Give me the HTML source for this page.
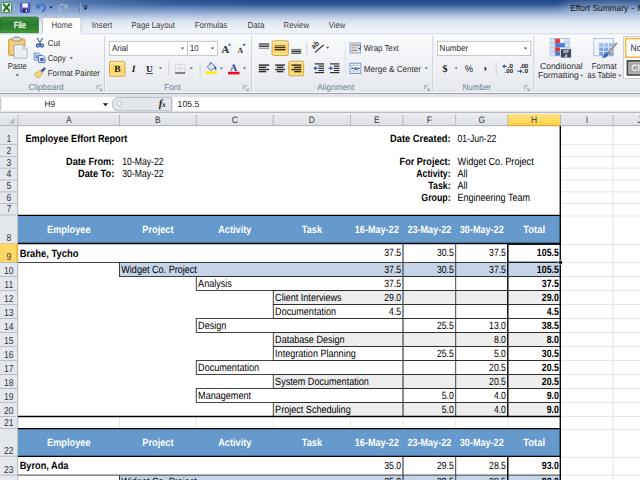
<!DOCTYPE html>
<html><head><meta charset="utf-8"><title>Effort Summary</title>
<style>
html,body{margin:0;padding:0;background:#fff;overflow:hidden}
svg{display:block;font-family:'Liberation Sans', sans-serif;}
text{white-space:pre;text-rendering:geometricPrecision}
</style></head>
<body>
<svg width="640" height="480" viewBox="0 0 640 480">
<defs>
<linearGradient id="gTitle" x1="0" y1="0" x2="0" y2="1">
<stop offset="0" stop-color="#1f4785"/><stop offset="0.12" stop-color="#2f5694"/><stop offset="0.24" stop-color="#5d7fb4"/><stop offset="0.35" stop-color="#8aa5ce"/><stop offset="0.47" stop-color="#b4c6e0"/><stop offset="0.59" stop-color="#d3deee"/><stop offset="0.71" stop-color="#e3eaf4"/><stop offset="0.82" stop-color="#ecf0f7"/><stop offset="1" stop-color="#f1f4f9"/>
</linearGradient>
<linearGradient id="gTitleL" x1="0" y1="0" x2="1" y2="0">
<stop offset="0" stop-color="#93b3de" stop-opacity="0.9"/><stop offset="0.12" stop-color="#93b3de" stop-opacity="0.62"/><stop offset="0.3" stop-color="#93b3de" stop-opacity="0.38"/><stop offset="0.6" stop-color="#93b3de" stop-opacity="0.12"/><stop offset="1" stop-color="#93b3de" stop-opacity="0"/>
</linearGradient>
<linearGradient id="gMaskV" x1="0" y1="0" x2="0" y2="1">
<stop offset="0" stop-color="#fff"/><stop offset="0.45" stop-color="#fff"/><stop offset="1" stop-color="#000"/>
</linearGradient>
<mask id="mTitle"><rect x="0" y="0" width="280" height="20" fill="url(#gMaskV)"/></mask>
<linearGradient id="gFade" x1="0" y1="0" x2="0" y2="1">
<stop offset="0" stop-color="#fff" stop-opacity="1"/><stop offset="0.6" stop-color="#fff" stop-opacity="0.3"/><stop offset="1" stop-color="#fff" stop-opacity="0"/>
</linearGradient>
<linearGradient id="gRibbon" x1="0" y1="0" x2="0" y2="1">
<stop offset="0" stop-color="#fbfcfd"/><stop offset="0.3" stop-color="#f3f5f8"/><stop offset="1" stop-color="#e5e8ed"/>
</linearGradient>
<linearGradient id="gFile" x1="0" y1="0" x2="0" y2="1">
<stop offset="0" stop-color="#3f8f40"/><stop offset="0.45" stop-color="#2a7a2e"/><stop offset="0.8" stop-color="#318a30"/><stop offset="1" stop-color="#4aa63c"/>
</linearGradient>
<linearGradient id="gHot" x1="0" y1="0" x2="0" y2="1">
<stop offset="0" stop-color="#fde9a6"/><stop offset="0.5" stop-color="#fcd462"/><stop offset="1" stop-color="#fde08a"/>
</linearGradient>
<linearGradient id="gColH" x1="0" y1="0" x2="0" y2="1">
<stop offset="0" stop-color="#ffe27c"/><stop offset="1" stop-color="#ffd14a"/>
</linearGradient>
<linearGradient id="gColHdr" x1="0" y1="0" x2="0" y2="1">
<stop offset="0" stop-color="#e9ebee"/><stop offset="1" stop-color="#dcdfe4"/>
</linearGradient>
<filter id="fBlur" x="-20%" y="-100%" width="140%" height="300%"><feGaussianBlur stdDeviation="4"/></filter>
</defs>
<rect x="0" y="0" width="640" height="480" fill="#fff" />
<rect x="0" y="0" width="640" height="34" fill="url(#gTitle)" />
<rect x="0" y="0" width="280" height="20" fill="url(#gTitleL)" mask="url(#mTitle)"/>
<rect x="1.2" y="2.4" width="10.4" height="10.2" fill="#f2f8ee" stroke="#3f8a45" stroke-width="1" rx="1" />
<path d="M3.2 3.8 L9.8 11.4 M9.8 3.8 L3.2 11.4" stroke="#1d6e2b" stroke-width="2.1" fill="none"/>
<line x1="14.5" y1="3" x2="14.5" y2="12" stroke="#9fb6d6" stroke-width="0.7" />
<rect x="20.4" y="3" width="9.6" height="9.4" fill="#5a5ccc" stroke="#3b3da0" stroke-width="0.6" rx="0.8" />
<rect x="22.4" y="3.3" width="5.6" height="4.2" fill="#f4f5fc" />
<rect x="22.8" y="8.8" width="5" height="3.6" fill="#23255e" />
<rect x="25.7" y="9.5" width="1.3" height="2.4" fill="#dfe3f5" />
<path d="M37.5 6.5 q4 -4 7 -0.5 q1.5 3.5 -2.5 6" fill="none" stroke="#3f6fd0" stroke-width="1.8"/>
<path d="M36 4 l0 5 l5 -1z" fill="#3f6fd0"/>
<path d="M49.2 6.5h3.6l-1.8 2.2z" fill="#16233f"/>
<path d="M66.5 6.5 q-4 -4 -7 -0.5 q-1.5 3.5 2.5 6" fill="none" stroke="#a8b3c6" stroke-width="1.8" opacity="0.8"/>
<path d="M68 4 l0 5 l-5 -1z" fill="#a8b3c6" opacity="0.8"/>
<path d="M71.3 6.6h3.4l-1.7 2z" fill="#7f8fb0"/>
<line x1="79.5" y1="3" x2="79.5" y2="12.5" stroke="#5a6f92" stroke-width="0.8" />
<line x1="80.3" y1="3" x2="80.3" y2="12.5" stroke="#b7c8e2" stroke-width="0.6" />
<line x1="83.5" y1="6" x2="87.5" y2="6" stroke="#16233f" stroke-width="0.9" />
<path d="M83.5 7.6000000000000005h4l-2.0 2.4z" fill="#16233f"/>
<ellipse cx="612" cy="8" rx="52" ry="7" fill="#fff" opacity="0.28" filter="url(#fBlur)"/>
<text x="570.3" y="11.2" font-size="8.8" fill="#111" textLength="57.9" lengthAdjust="spacingAndGlyphs">Effort Summary</text>
<text x="631.2" y="11.2" font-size="8.8" fill="#111">-</text>
<text x="637.6" y="11.2" font-size="8.8" fill="#111" textLength="53.69" lengthAdjust="spacingAndGlyphs">Microsoft Excel</text>
<path d="M0 33 V19 q0 -2 2 -2 H36.5 q2 0 2 2 V33z" fill="url(#gFile)" stroke="#1d6b25" stroke-width="0.6"/>
<text x="19.9" y="27.8" font-size="8.8" fill="#fff" stroke="#fff" stroke-width="0.25" text-anchor="middle" textLength="12.2" lengthAdjust="spacingAndGlyphs">File</text>
<path d="M42.5 33.5 V19.5 q0 -2 2 -2 H79 q2 0 2 2 V33.5" fill="#fdfefe" stroke="#aab1be" stroke-width="0.7"/>
<text x="62" y="28" font-size="8.7" fill="#3c3c3c" text-anchor="middle" textLength="21" lengthAdjust="spacingAndGlyphs">Home</text>
<text x="102" y="28" font-size="8.7" fill="#3c3c3c" text-anchor="middle" textLength="20.5" lengthAdjust="spacingAndGlyphs">Insert</text>
<text x="153.2" y="28" font-size="8.7" fill="#3c3c3c" text-anchor="middle" textLength="43.5" lengthAdjust="spacingAndGlyphs">Page Layout</text>
<text x="211" y="28" font-size="8.7" fill="#3c3c3c" text-anchor="middle" textLength="32.5" lengthAdjust="spacingAndGlyphs">Formulas</text>
<text x="256" y="28" font-size="8.7" fill="#3c3c3c" text-anchor="middle" textLength="17" lengthAdjust="spacingAndGlyphs">Data</text>
<text x="296.3" y="28" font-size="8.7" fill="#3c3c3c" text-anchor="middle" textLength="25.5" lengthAdjust="spacingAndGlyphs">Review</text>
<text x="337" y="28" font-size="8.7" fill="#3c3c3c" text-anchor="middle" textLength="16.5" lengthAdjust="spacingAndGlyphs">View</text>
<rect x="0" y="33.5" width="640" height="60" fill="url(#gRibbon)" />
<rect x="0" y="33.5" width="42.5" height="0.8" fill="#c3d0e2" />
<rect x="81" y="33.5" width="559" height="0.8" fill="#c3d0e2" />
<rect x="0" y="92.2" width="640" height="0.9" fill="#f4f5f7" />
<rect x="0" y="93.1" width="640" height="1.1" fill="#979ca5" />
<rect x="0" y="94.2" width="640" height="3.2" fill="#dfe2e7" />
<line x1="104.8" y1="36" x2="104.8" y2="91" stroke="#bcc1c9" stroke-width="0.9" />
<line x1="105.7" y1="36" x2="105.7" y2="91" stroke="#fbfcfe" stroke-width="0.8" />
<line x1="251.8" y1="36" x2="251.8" y2="91" stroke="#bcc1c9" stroke-width="0.9" />
<line x1="252.70000000000002" y1="36" x2="252.70000000000002" y2="91" stroke="#fbfcfe" stroke-width="0.8" />
<line x1="433" y1="36" x2="433" y2="91" stroke="#bcc1c9" stroke-width="0.9" />
<line x1="433.9" y1="36" x2="433.9" y2="91" stroke="#fbfcfe" stroke-width="0.8" />
<line x1="534" y1="36" x2="534" y2="91" stroke="#bcc1c9" stroke-width="0.9" />
<line x1="534.9" y1="36" x2="534.9" y2="91" stroke="#fbfcfe" stroke-width="0.8" />
<rect x="8.6" y="38.8" width="16.4" height="16.8" fill="#efc062" stroke="#c4933b" stroke-width="0.8" rx="1.6" />
<rect x="10.2" y="41" width="13.2" height="13" fill="#f4cd7c" />
<rect x="12.8" y="37.2" width="7.6" height="3.8" fill="#e6e6e6" stroke="#6f6f6f" stroke-width="0.7" rx="1.2" />
<rect x="15" y="36.6" width="3.2" height="1.6" fill="#d8d8d8" stroke="#6f6f6f" stroke-width="0.5" rx="0.8" />
<path d="M14.2 45 H23 L27 49 V58 H14.2z" fill="#fcfdfe" stroke="#8a9ab3" stroke-width="0.8"/>
<path d="M23 45 V49 H27" fill="#e1e7f0" stroke="#8a9ab3" stroke-width="0.6"/>
<line x1="16" y1="48" x2="22" y2="48" stroke="#c9d2e0" stroke-width="0.7" />
<line x1="16" y1="50" x2="25.2" y2="50" stroke="#c9d2e0" stroke-width="0.7" />
<line x1="16" y1="52" x2="25.2" y2="52" stroke="#c9d2e0" stroke-width="0.7" />
<line x1="16" y1="54" x2="25.2" y2="54" stroke="#c9d2e0" stroke-width="0.7" />
<line x1="16" y1="56" x2="25.2" y2="56" stroke="#c9d2e0" stroke-width="0.7" />
<text x="17.2" y="69.2" font-size="8.7" fill="#2e2e2e" text-anchor="middle" textLength="19" lengthAdjust="spacingAndGlyphs">Paste</text>
<path d="M15.399999999999999 74.2h3.6l-1.8 2z" fill="#555"/>
<path d="M37.2 37.8 L41 44.6 M42.6 37.8 L38.8 44.6" stroke="#76859f" stroke-width="1.5" fill="none"/>
<circle cx="37.9" cy="45.6" r="1.5" fill="#dfe6f6" stroke="#2b4fb0" stroke-width="1.3"/><circle cx="42" cy="45.6" r="1.5" fill="#dfe6f6" stroke="#2b4fb0" stroke-width="1.3"/>
<text x="47.8" y="45.8" font-size="8.7" fill="#2e2e2e" textLength="12.4" lengthAdjust="spacingAndGlyphs">Cut</text>
<path d="M34.2 53 H38.6 L40.6 55 V60.2 H34.2z" fill="#d4e1f5" stroke="#5c7fc0" stroke-width="0.8"/>
<path d="M38.6 55.4 H43 L45 57.4 V62.6 H38.6z" fill="#dce7f8" stroke="#3a5fb0" stroke-width="0.8"/>
<rect x="35.6" y="55.2" width="2.2" height="3.2" fill="#5a7fcb" />
<rect x="40.2" y="58" width="3.4" height="3.2" fill="#3f66bb" />
<text x="47.8" y="60.8" font-size="8.7" fill="#2e2e2e" textLength="18" lengthAdjust="spacingAndGlyphs">Copy</text>
<path d="M69.6 57.2h3.4l-1.7 2z" fill="#555"/>
<path d="M34.5 74 L40 70 L43 73.5 L38 78 Q35.5 77.5 34.5 74z" fill="#f0d675" stroke="#b99a35" stroke-width="0.6"/>
<path d="M40.5 70.5 L44.5 67 L46 68.6 L42.6 72.6z" fill="#4f55a8"/>
<text x="47.8" y="76.4" font-size="8.7" fill="#2e2e2e" textLength="52.2" lengthAdjust="spacingAndGlyphs">Format Painter</text>
<text x="46" y="90.2" font-size="8.7" fill="#6f7f97" text-anchor="middle" textLength="35.2" lengthAdjust="spacingAndGlyphs">Clipboard</text>
<path d="M97 89.3 V85.8 H100.5" fill="none" stroke="#8794a8" stroke-width="0.8"/>
<path d="M99.2 88.0 L101.6 90.39999999999999 M101.8 88.6 V90.6 H99.8" fill="none" stroke="#8794a8" stroke-width="0.8"/>
<rect x="109.5" y="41.3" width="78" height="14.2" fill="#fff" stroke="#b7bcc4" stroke-width="0.8" />
<rect x="187.5" y="41.3" width="30" height="14.2" fill="#fff" stroke="#b7bcc4" stroke-width="0.8" />
<text x="112" y="51.3" font-size="8.7" fill="#1e1e1e" textLength="16" lengthAdjust="spacingAndGlyphs">Arial</text>
<path d="M180.9 47.4h3.2l-1.6 2z" fill="#444"/>
<text x="190" y="51.3" font-size="8.7" fill="#1e1e1e" textLength="8.5" lengthAdjust="spacingAndGlyphs">10</text>
<path d="M210.9 47.4h3.2l-1.6 2z" fill="#444"/>
<text x="221.4" y="52.5" font-size="10.8" fill="#2a2a2a" font-weight="bold" font-family="'Liberation Serif', serif" textLength="7.8" lengthAdjust="spacingAndGlyphs">A</text>
<path d="M227.8 45.6 l1.7 -2.4 l1.7 2.4z" fill="#2d58b8"/>
<text x="237.6" y="52.5" font-size="7.8" fill="#2a2a2a" font-weight="bold" font-family="'Liberation Serif', serif">A</text>
<path d="M242.4 43.9 h3.4 l-1.7 2.4z" fill="#2d58b8"/>
<rect x="109.5" y="61.3" width="15.5" height="15" fill="url(#gHot)" stroke="#c59b3b" stroke-width="0.8" rx="1.5" />
<text x="117.3" y="72.3" font-size="9.5" fill="#1a1a1a" font-weight="bold" text-anchor="middle" font-family="'Liberation Serif', serif">B</text>
<text x="133.5" y="72.3" font-size="9.5" fill="#1a1a1a" font-weight="bold" text-anchor="middle" font-style="italic" font-family="'Liberation Serif', serif">I</text>
<text x="149.5" y="72" font-size="9" fill="#1a1a1a" font-weight="bold" text-anchor="middle" font-family="'Liberation Serif', serif">U</text>
<line x1="146" y1="73.6" x2="153" y2="73.6" stroke="#1a1a1a" stroke-width="0.8" />
<path d="M158.9 67.5h3.2l-1.6 2z" fill="#666"/>
<line x1="168.8" y1="62" x2="168.8" y2="75.5" stroke="#c6cad1" stroke-width="0.8" />
<rect x="175.5" y="64.4" width="9.4" height="8.4" fill="none" stroke="#b9bec7" stroke-width="0.6" stroke-dasharray="1 0.6"/>
<line x1="180.2" y1="64.4" x2="180.2" y2="72.8" stroke="#b9bec7" stroke-width="0.6" stroke-dasharray="1 0.6"/>
<line x1="175.5" y1="68.5" x2="185" y2="68.5" stroke="#b9bec7" stroke-width="0.6" stroke-dasharray="1 0.6"/>
<line x1="175.2" y1="73" x2="185.2" y2="73" stroke="#333" stroke-width="1.1" />
<path d="M189.70000000000002 67.5h3.2l-1.6 2z" fill="#666"/>
<line x1="200" y1="62" x2="200" y2="75.5" stroke="#c6cad1" stroke-width="0.8" />
<path d="M207.2 66.6 L211.4 63 L215.4 66.8 L211 70.6z" fill="#dde7f6" stroke="#4d6596" stroke-width="0.9"/>
<path d="M209 63.4 q1.6 -1.6 3 0" fill="none" stroke="#4d6596" stroke-width="0.8"/>
<path d="M214.6 65.4 q2.6 2.2 1.4 5 q-2 -1.4 -1.4 -5z" fill="#2d58b8"/>
<rect x="205.5" y="71.5" width="11.5" height="2.6" fill="#ffee00" />
<path d="M219.9 67.5h3.2l-1.6 2z" fill="#666"/>
<text x="233.7" y="71.3" font-size="10" fill="#1d3f8f" font-weight="bold" text-anchor="middle" font-family="'Liberation Serif', serif">A</text>
<rect x="228" y="71.8" width="11.5" height="2.6" fill="#e81123" />
<path d="M242.9 67.5h3.2l-1.6 2z" fill="#666"/>
<text x="172.5" y="90.2" font-size="8.7" fill="#6f7f97" text-anchor="middle" textLength="16.5" lengthAdjust="spacingAndGlyphs">Font</text>
<path d="M243.5 89.3 V85.8 H247.0" fill="none" stroke="#8794a8" stroke-width="0.8"/>
<path d="M245.7 88.0 L248.1 90.39999999999999 M248.3 88.6 V90.6 H246.3" fill="none" stroke="#8794a8" stroke-width="0.8"/>
<line x1="258.8" y1="43.9" x2="269.2" y2="43.9" stroke="#4a4a4a" stroke-width="1.3" />
<line x1="258.8" y1="46.1" x2="269.2" y2="46.1" stroke="#2e2e2e" stroke-width="1.4" />
<line x1="258.8" y1="48.2" x2="269.2" y2="48.2" stroke="#777" stroke-width="1.0" />
<rect x="272" y="40.8" width="16.4" height="14.7" fill="url(#gHot)" stroke="#c59b3b" stroke-width="0.8" rx="1.5" />
<line x1="274.6" y1="45.4" x2="285.4" y2="45.4" stroke="#8a7430" stroke-width="0.9" />
<line x1="274.6" y1="47.4" x2="285.4" y2="47.4" stroke="#3a3218" stroke-width="1.5" />
<line x1="274.6" y1="49.7" x2="285.4" y2="49.7" stroke="#3a3218" stroke-width="1.4" />
<line x1="291.3" y1="49.4" x2="301.2" y2="49.4" stroke="#777" stroke-width="1.0" />
<line x1="291.3" y1="51.2" x2="301.2" y2="51.2" stroke="#2e2e2e" stroke-width="1.4" />
<line x1="291.3" y1="53.2" x2="301.2" y2="53.2" stroke="#4a4a4a" stroke-width="1.3" />
<line x1="306.7" y1="41.5" x2="306.7" y2="55" stroke="#c6cad1" stroke-width="0.8" />
<path d="M315 52.3 L323.6 45" stroke="#2e2e2e" stroke-width="1.1"/>
<text x="0" y="0" font-size="7" font-weight="bold" fill="#2e2e2e" transform="translate(313.6,49.2) rotate(-40)">ab</text>
<path d="M326.0 46.8h3.2l-1.6 2z" fill="#555"/>
<line x1="345.2" y1="41.5" x2="345.2" y2="76" stroke="#dcdfe4" stroke-width="0.8" />
<rect x="350" y="43" width="10.6" height="10" fill="#dbe5f4" stroke="#7f93b8" stroke-width="0.8" />
<line x1="351.4" y1="45.2" x2="359.4" y2="45.2" stroke="#c58a4c" stroke-width="1.2" />
<line x1="351.4" y1="47.8" x2="357" y2="47.8" stroke="#8a9dc0" stroke-width="0.9" />
<line x1="351.4" y1="50.4" x2="357.4" y2="50.4" stroke="#c58a4c" stroke-width="1.2" />
<path d="M359.4 45.2 q2.4 0.6 0.6 3.2" fill="none" stroke="#3a5a9a" stroke-width="0.9"/><path d="M358 48.6 l2.6 -1.2 l-0.2 2.6z" fill="#3a5a9a"/>
<text x="363.8" y="51.3" font-size="8.7" fill="#2e2e2e" textLength="35" lengthAdjust="spacingAndGlyphs">Wrap Text</text>
<line x1="258.8" y1="65.1" x2="269.2" y2="65.1" stroke="#2e2e2e" stroke-width="1.45" />
<line x1="258.8" y1="67.3" x2="266.2" y2="67.3" stroke="#2e2e2e" stroke-width="1.45" />
<line x1="258.8" y1="69.5" x2="269.2" y2="69.5" stroke="#2e2e2e" stroke-width="1.45" />
<line x1="258.8" y1="71.6" x2="266.2" y2="71.6" stroke="#2e2e2e" stroke-width="1.45" />
<line x1="275.20000000000005" y1="65.1" x2="285.0" y2="65.1" stroke="#2e2e2e" stroke-width="1.45" />
<line x1="276.8" y1="67.3" x2="283.40000000000003" y2="67.3" stroke="#2e2e2e" stroke-width="1.45" />
<line x1="275.20000000000005" y1="69.5" x2="285.0" y2="69.5" stroke="#2e2e2e" stroke-width="1.45" />
<line x1="276.8" y1="71.6" x2="283.40000000000003" y2="71.6" stroke="#2e2e2e" stroke-width="1.45" />
<rect x="288.7" y="61.2" width="15" height="14.6" fill="url(#gHot)" stroke="#c59b3b" stroke-width="0.8" rx="1.5" />
<line x1="291.4" y1="65.1" x2="301.2" y2="65.1" stroke="#3a3218" stroke-width="1.45" />
<line x1="294.2" y1="67.3" x2="301.2" y2="67.3" stroke="#3a3218" stroke-width="1.45" />
<line x1="291.4" y1="69.5" x2="301.2" y2="69.5" stroke="#3a3218" stroke-width="1.45" />
<line x1="294.2" y1="71.6" x2="301.2" y2="71.6" stroke="#3a3218" stroke-width="1.45" />
<line x1="314.7" y1="63.9" x2="324.1" y2="63.9" stroke="#2e2e2e" stroke-width="1.2" />
<line x1="318.5" y1="66.1" x2="324.1" y2="66.1" stroke="#2e2e2e" stroke-width="1.2" />
<line x1="318.5" y1="68.3" x2="324.1" y2="68.3" stroke="#2e2e2e" stroke-width="1.2" />
<line x1="318.5" y1="70.5" x2="324.1" y2="70.5" stroke="#2e2e2e" stroke-width="1.2" />
<line x1="314.7" y1="72.6" x2="324.1" y2="72.6" stroke="#2e2e2e" stroke-width="1.2" />
<line x1="330.0" y1="63.9" x2="339.40000000000003" y2="63.9" stroke="#2e2e2e" stroke-width="1.2" />
<line x1="333.8" y1="66.1" x2="339.40000000000003" y2="66.1" stroke="#2e2e2e" stroke-width="1.2" />
<line x1="333.8" y1="68.3" x2="339.40000000000003" y2="68.3" stroke="#2e2e2e" stroke-width="1.2" />
<line x1="333.8" y1="70.5" x2="339.40000000000003" y2="70.5" stroke="#2e2e2e" stroke-width="1.2" />
<line x1="330.0" y1="72.6" x2="339.40000000000003" y2="72.6" stroke="#2e2e2e" stroke-width="1.2" />
<path d="M313.3 68.3 l2.8 -2.3 v4.6z" fill="#2d58b8"/><path d="M315.5 68.3 h2.4" stroke="#2d58b8" stroke-width="1.1"/>
<path d="M333 68.3 l-2.8 -2.3 v4.6z" fill="#2d58b8"/><path d="M328.4 68.3 h2.4" stroke="#2d58b8" stroke-width="1.1"/>
<rect x="350" y="63.2" width="10.8" height="10.2" fill="#f4f7fc" stroke="#6d8ac6" stroke-width="0.9" />
<line x1="353.6" y1="63.2" x2="353.6" y2="73.4" stroke="#8fa7d8" stroke-width="0.7" />
<line x1="357.2" y1="63.2" x2="357.2" y2="73.4" stroke="#8fa7d8" stroke-width="0.7" />
<line x1="350" y1="65.8" x2="360.8" y2="65.8" stroke="#8fa7d8" stroke-width="0.7" />
<line x1="350" y1="70.8" x2="360.8" y2="70.8" stroke="#8fa7d8" stroke-width="0.7" />
<rect x="350.5" y="66.2" width="9.8" height="4.2" fill="#eaf0fa" />
<path d="M351.2 68.3 h2.6 M359.6 68.3 h-2.6" stroke="#1f2f5f" stroke-width="1"/>
<text x="355.4" y="70" font-size="5.2" fill="#1f2f5f" font-weight="bold" text-anchor="middle">a</text>
<text x="363.8" y="72" font-size="8.7" fill="#2e2e2e" textLength="57.2" lengthAdjust="spacingAndGlyphs">Merge &amp; Center</text>
<path d="M424.7 67.5h3.2l-1.6 2z" fill="#666"/>
<text x="335.8" y="90.2" font-size="8.7" fill="#6f7f97" text-anchor="middle" textLength="37" lengthAdjust="spacingAndGlyphs">Alignment</text>
<path d="M424.5 89.3 V85.8 H428.0" fill="none" stroke="#8794a8" stroke-width="0.8"/>
<path d="M426.7 88.0 L429.1 90.39999999999999 M429.3 88.6 V90.6 H427.3" fill="none" stroke="#8794a8" stroke-width="0.8"/>
<rect x="437.5" y="41.3" width="93.3" height="14.2" fill="#fff" stroke="#b7bcc4" stroke-width="0.8" />
<text x="439.6" y="51.3" font-size="8.7" fill="#1e1e1e" textLength="28.5" lengthAdjust="spacingAndGlyphs">Number</text>
<path d="M523.9 47.4h3.2l-1.6 2z" fill="#444"/>
<text x="445" y="72.2" font-size="10.2" fill="#1a1a1a" font-weight="bold" text-anchor="middle" font-family="'Liberation Serif', serif">$</text>
<path d="M454.59999999999997 67.5h3.2l-1.6 2z" fill="#666"/>
<text x="469" y="72.2" font-size="9.6" fill="#1a1a1a" text-anchor="middle" textLength="8.3" lengthAdjust="spacingAndGlyphs">%</text>
<text x="485.2" y="75.6" font-size="13" fill="#1a1a1a" font-weight="bold" text-anchor="middle" font-family="'Liberation Serif', serif">’</text>
<line x1="496.2" y1="62" x2="496.2" y2="75.5" stroke="#c6cad1" stroke-width="0.8" />
<text x="513" y="68.2" font-size="6.2" fill="#222" font-weight="bold" text-anchor="end" textLength="5.6" lengthAdjust="spacingAndGlyphs">.0</text>
<text x="513" y="73.4" font-size="6.2" fill="#222" font-weight="bold" text-anchor="end" textLength="8.4" lengthAdjust="spacingAndGlyphs">.00</text>
<path d="M502.2 66.4 l2.6 -2.1 v4.2z" fill="#2d58b8"/><path d="M504.4 66.4 h2.6" stroke="#2d58b8" stroke-width="1.1"/>
<text x="528.2" y="68.2" font-size="6.2" fill="#222" font-weight="bold" text-anchor="end" textLength="8.4" lengthAdjust="spacingAndGlyphs">.00</text>
<text x="528.2" y="73.4" font-size="6.2" fill="#222" font-weight="bold" text-anchor="end" textLength="5.6" lengthAdjust="spacingAndGlyphs">.0</text>
<path d="M522.6 71.2 l-2.6 -2.1 v4.2z" fill="#2d58b8"/><path d="M517.4 71.2 h2.8" stroke="#2d58b8" stroke-width="1.1"/>
<text x="476.8" y="90.2" font-size="8.7" fill="#6f7f97" text-anchor="middle" textLength="28.5" lengthAdjust="spacingAndGlyphs">Number</text>
<path d="M524.5 89.3 V85.8 H528.0" fill="none" stroke="#8794a8" stroke-width="0.8"/>
<path d="M526.7 88.0 L529.1 90.39999999999999 M529.3 88.6 V90.6 H527.3" fill="none" stroke="#8794a8" stroke-width="0.8"/>
<rect x="550.2" y="38.6" width="19.5" height="17.2" fill="#fdfeff" stroke="#8fa8d4" stroke-width="0.7" />
<rect x="550.4" y="38.8" width="4.6" height="16.8" fill="#d5e1f4" />
<rect x="565" y="38.8" width="4.6" height="16.8" fill="#d5e1f4" />
<line x1="550.2" y1="42.9" x2="569.7" y2="42.9" stroke="#9db4dc" stroke-width="0.6" />
<line x1="550.2" y1="47.2" x2="569.7" y2="47.2" stroke="#9db4dc" stroke-width="0.6" />
<line x1="550.2" y1="51.5" x2="569.7" y2="51.5" stroke="#9db4dc" stroke-width="0.6" />
<line x1="555.08" y1="38.6" x2="555.08" y2="55.8" stroke="#9db4dc" stroke-width="0.6" />
<line x1="559.96" y1="38.6" x2="559.96" y2="55.8" stroke="#9db4dc" stroke-width="0.6" />
<line x1="564.84" y1="38.6" x2="564.84" y2="55.8" stroke="#9db4dc" stroke-width="0.6" />
<rect x="555.2" y="38.8" width="4.7" height="4.1" fill="#e2342d" />
<rect x="555.2" y="43.1" width="9.6" height="4.1" fill="#4a7ad6" />
<rect x="555.2" y="47.4" width="4.7" height="4.1" fill="#e2342d" />
<rect x="555.2" y="47.4" width="9.6" height="4.1" fill="#4a7ad6" opacity="0.0"/>
<rect x="555.2" y="51.7" width="4.7" height="3.9" fill="#4a7ad6" />
<rect x="560.6" y="48.9" width="10.6" height="9" fill="#39455c" stroke="#e8edf5" stroke-width="0.6" />
<text x="565.9" y="53.2" font-size="4.8" fill="#fff" font-weight="bold" text-anchor="middle">≤≠</text>
<text x="565.9" y="57" font-size="4.4" fill="#fff" font-weight="bold" text-anchor="middle">≥</text>
<text x="561.3" y="69" font-size="8.7" fill="#2e2e2e" text-anchor="middle" textLength="42.6" lengthAdjust="spacingAndGlyphs">Conditional</text>
<text x="558.4" y="78.2" font-size="8.7" fill="#2e2e2e" text-anchor="middle" textLength="41" lengthAdjust="spacingAndGlyphs">Formatting</text>
<path d="M580.1999999999999 74.8h3.2l-1.6 2z" fill="#666"/>
<rect x="593.9" y="38.6" width="19.5" height="17.2" fill="#f4f8fe" stroke="#8fa8d4" stroke-width="0.7" />
<rect x="598.8" y="42.9" width="14.4" height="12.7" fill="#7da3e4" />
<rect x="598.8" y="42.9" width="14.4" height="4.3" fill="#9dbbee" />
<line x1="593.9" y1="42.9" x2="613.4" y2="42.9" stroke="#e9f0fb" stroke-width="0.8" />
<line x1="593.9" y1="47.2" x2="613.4" y2="47.2" stroke="#e9f0fb" stroke-width="0.8" />
<line x1="593.9" y1="51.5" x2="613.4" y2="51.5" stroke="#e9f0fb" stroke-width="0.8" />
<line x1="598.78" y1="38.6" x2="598.78" y2="55.8" stroke="#e9f0fb" stroke-width="0.8" />
<line x1="603.66" y1="38.6" x2="603.66" y2="55.8" stroke="#e9f0fb" stroke-width="0.8" />
<line x1="608.54" y1="38.6" x2="608.54" y2="55.8" stroke="#e9f0fb" stroke-width="0.8" />
<path d="M616.2 42 L608.4 51.2 L610 52.6 L617.6 43.4z" fill="#8a8a8a" stroke="#f2f2f2" stroke-width="0.4"/>
<path d="M608.6 50.8 l1.8 1.6 l-1.6 1.8 l-1.9 -1.5z" fill="#b08a4a"/>
<path d="M607 52.6 q-3.6 1 -4.8 5.4 q4.6 0.4 6.6 -3.8z" fill="#3b69c9"/>
<text x="604.2" y="69" font-size="8.7" fill="#2e2e2e" text-anchor="middle" textLength="25" lengthAdjust="spacingAndGlyphs">Format</text>
<text x="601.8" y="78.2" font-size="8.7" fill="#2e2e2e" text-anchor="middle" textLength="29" lengthAdjust="spacingAndGlyphs">as Table</text>
<path d="M618.1999999999999 74.8h3.2l-1.6 2z" fill="#666"/>
<rect x="623.5" y="36.5" width="20" height="42" fill="#fff" stroke="#b7bcc4" stroke-width="0.7" />
<rect x="625.6" y="38.6" width="20" height="18.6" fill="#fff" stroke="#f0b93a" stroke-width="1.6" />
<text x="630.6" y="51.2" font-size="9.6" fill="#1b2442" textLength="27.84" lengthAdjust="spacingAndGlyphs">Normal</text>
<rect x="627.4" y="60.8" width="20" height="14.2" fill="#a5a5a5" stroke="#3f3f3f" stroke-width="1.5" />
<rect x="629" y="62.4" width="20" height="11" fill="none" stroke="#c8c8c8" stroke-width="0.5" />
<text x="631.2" y="70.8" font-size="9.6" fill="#ececec" font-weight="bold" textLength="44.18" lengthAdjust="spacingAndGlyphs">Check Cell</text>
<rect x="0" y="97.4" width="640" height="13.2" fill="#fff" />
<rect x="0" y="110.6" width="640" height="1.3" fill="#e6e8ec" />
<rect x="0" y="111.9" width="640" height="1.0" fill="#a9adb4" />
<rect x="0" y="112.9" width="640" height="1.3" fill="#eceef1" />
<rect x="0.4" y="97.4" width="0.8" height="13.2" fill="#a3a8b0" />
<path d="M171.5 97.4 H119.5 q-7.2 0 -7.2 6.7 q0 6.7 7.2 6.7 H171.5z" fill="#e3e6ea" stroke="#a9aeb7" stroke-width="0.8"/>
<circle cx="119" cy="103.4" r="2.3" fill="#f3f4f6" stroke="#aeb3bb" stroke-width="0.7"/>
<rect x="171.5" y="97.4" width="0.8" height="13.2" fill="#b3b8c0" />
<text x="49.7" y="106.6" font-size="8.7" fill="#1e1e1e" text-anchor="middle" textLength="10.6" lengthAdjust="spacingAndGlyphs">H9</text>
<path d="M102.80000000000001 103.25h5.2l-2.6 2.9z" fill="#1a1a1a"/>
<text x="158.8" y="106.6" font-size="11" font-style="italic" font-weight="bold" fill="#222" font-family="'Liberation Serif', serif">f<tspan font-size="7.5" dy="0.4" dx="-0.4">x</tspan></text>
<text x="177.6" y="106.8" font-size="8.9" fill="#1e1e1e" textLength="21.7" lengthAdjust="spacingAndGlyphs">105.5</text>
<line x1="560.5" y1="144.4" x2="640" y2="144.4" stroke="#dce0e7" stroke-width="0.8" />
<line x1="560.5" y1="156.6" x2="640" y2="156.6" stroke="#dce0e7" stroke-width="0.8" />
<line x1="560.5" y1="168.2" x2="640" y2="168.2" stroke="#dce0e7" stroke-width="0.8" />
<line x1="560.5" y1="180" x2="640" y2="180" stroke="#dce0e7" stroke-width="0.8" />
<line x1="560.5" y1="191.8" x2="640" y2="191.8" stroke="#dce0e7" stroke-width="0.8" />
<line x1="560.5" y1="203.5" x2="640" y2="203.5" stroke="#dce0e7" stroke-width="0.8" />
<line x1="560.5" y1="216.0" x2="640" y2="216.0" stroke="#dce0e7" stroke-width="0.8" />
<line x1="560.5" y1="244.5" x2="640" y2="244.5" stroke="#dce0e7" stroke-width="0.8" />
<line x1="560.5" y1="262.5" x2="640" y2="262.5" stroke="#dce0e7" stroke-width="0.8" />
<line x1="560.5" y1="276.5" x2="640" y2="276.5" stroke="#dce0e7" stroke-width="0.8" />
<line x1="560.5" y1="290.5" x2="640" y2="290.5" stroke="#dce0e7" stroke-width="0.8" />
<line x1="560.5" y1="304.5" x2="640" y2="304.5" stroke="#dce0e7" stroke-width="0.8" />
<line x1="560.5" y1="318.5" x2="640" y2="318.5" stroke="#dce0e7" stroke-width="0.8" />
<line x1="560.5" y1="332.5" x2="640" y2="332.5" stroke="#dce0e7" stroke-width="0.8" />
<line x1="560.5" y1="346.5" x2="640" y2="346.5" stroke="#dce0e7" stroke-width="0.8" />
<line x1="560.5" y1="360.5" x2="640" y2="360.5" stroke="#dce0e7" stroke-width="0.8" />
<line x1="560.5" y1="374.5" x2="640" y2="374.5" stroke="#dce0e7" stroke-width="0.8" />
<line x1="560.5" y1="388.5" x2="640" y2="388.5" stroke="#dce0e7" stroke-width="0.8" />
<line x1="560.5" y1="402.5" x2="640" y2="402.5" stroke="#dce0e7" stroke-width="0.8" />
<line x1="560.5" y1="416.5" x2="640" y2="416.5" stroke="#dce0e7" stroke-width="0.8" />
<line x1="560.5" y1="429.4" x2="640" y2="429.4" stroke="#dce0e7" stroke-width="0.8" />
<line x1="560.5" y1="457.3" x2="640" y2="457.3" stroke="#dce0e7" stroke-width="0.8" />
<line x1="560.5" y1="475.1" x2="640" y2="475.1" stroke="#dce0e7" stroke-width="0.8" />
<line x1="613.2" y1="126" x2="613.2" y2="480" stroke="#dce0e7" stroke-width="0.8" />
<rect x="0" y="114.2" width="640" height="11.8" fill="url(#gColHdr)" />
<rect x="0" y="125.3" width="640" height="0.8" fill="#a3a8b0" />
<text x="68.75" y="123.2" font-size="9.4" fill="#33363d" text-anchor="middle" textLength="5.64" lengthAdjust="spacingAndGlyphs">A</text>
<line x1="18" y1="114.5" x2="18" y2="125.5" stroke="#a9aeb6" stroke-width="0.8" />
<text x="157.9" y="123.2" font-size="9.4" fill="#33363d" text-anchor="middle" textLength="5.64" lengthAdjust="spacingAndGlyphs">B</text>
<line x1="119.5" y1="114.5" x2="119.5" y2="125.5" stroke="#a9aeb6" stroke-width="0.8" />
<text x="234.8" y="123.2" font-size="9.4" fill="#33363d" text-anchor="middle" textLength="6.11" lengthAdjust="spacingAndGlyphs">C</text>
<line x1="196.3" y1="114.5" x2="196.3" y2="125.5" stroke="#a9aeb6" stroke-width="0.8" />
<text x="311.9" y="123.2" font-size="9.4" fill="#33363d" text-anchor="middle" textLength="6.11" lengthAdjust="spacingAndGlyphs">D</text>
<line x1="273.3" y1="114.5" x2="273.3" y2="125.5" stroke="#a9aeb6" stroke-width="0.8" />
<text x="376.75" y="123.2" font-size="9.4" fill="#33363d" text-anchor="middle" textLength="5.64" lengthAdjust="spacingAndGlyphs">E</text>
<line x1="350.5" y1="114.5" x2="350.5" y2="125.5" stroke="#a9aeb6" stroke-width="0.8" />
<text x="429.35" y="123.2" font-size="9.4" fill="#33363d" text-anchor="middle" textLength="5.17" lengthAdjust="spacingAndGlyphs">F</text>
<line x1="403" y1="114.5" x2="403" y2="125.5" stroke="#a9aeb6" stroke-width="0.8" />
<text x="481.75" y="123.2" font-size="9.4" fill="#33363d" text-anchor="middle" textLength="6.58" lengthAdjust="spacingAndGlyphs">G</text>
<line x1="455.7" y1="114.5" x2="455.7" y2="125.5" stroke="#a9aeb6" stroke-width="0.8" />
<rect x="507.8" y="114.2" width="52.69999999999999" height="11.4" fill="url(#gColH)" />
<rect x="507.8" y="125" width="52.69999999999999" height="1.1" fill="#e3a72d" />
<text x="534.15" y="123.2" font-size="9.4" fill="#33363d" text-anchor="middle" textLength="6.11" lengthAdjust="spacingAndGlyphs">H</text>
<line x1="507.8" y1="114.5" x2="507.8" y2="125.5" stroke="#a9aeb6" stroke-width="0.8" />
<text x="586.85" y="123.2" font-size="9.4" fill="#33363d" text-anchor="middle" textLength="2.35" lengthAdjust="spacingAndGlyphs">I</text>
<line x1="560.5" y1="114.5" x2="560.5" y2="125.5" stroke="#a9aeb6" stroke-width="0.8" />
<text x="639.6" y="123.2" font-size="9.4" fill="#33363d" text-anchor="middle" textLength="4.23" lengthAdjust="spacingAndGlyphs">J</text>
<line x1="613.2" y1="114.5" x2="613.2" y2="125.5" stroke="#a9aeb6" stroke-width="0.8" />
<path d="M14.5 117.5 V123.5 H8.5z" fill="#b3bdcc"/>
<rect x="0" y="126" width="18" height="354" fill="#e4e7eb" />
<rect x="17.4" y="126" width="0.8" height="354" fill="#a3a8b0" />
<line x1="0" y1="144.4" x2="17.4" y2="144.4" stroke="#aeb3bb" stroke-width="0.8" />
<text x="8.8" y="141.8" font-size="10.2" fill="#33363d" text-anchor="middle" textLength="4.76" lengthAdjust="spacingAndGlyphs">1</text>
<line x1="0" y1="156.6" x2="17.4" y2="156.6" stroke="#aeb3bb" stroke-width="0.8" />
<text x="8.8" y="154.0" font-size="10.2" fill="#33363d" text-anchor="middle" textLength="4.76" lengthAdjust="spacingAndGlyphs">2</text>
<line x1="0" y1="168.2" x2="17.4" y2="168.2" stroke="#aeb3bb" stroke-width="0.8" />
<text x="8.8" y="165.6" font-size="10.2" fill="#33363d" text-anchor="middle" textLength="4.76" lengthAdjust="spacingAndGlyphs">3</text>
<line x1="0" y1="180" x2="17.4" y2="180" stroke="#aeb3bb" stroke-width="0.8" />
<text x="8.8" y="177.4" font-size="10.2" fill="#33363d" text-anchor="middle" textLength="4.76" lengthAdjust="spacingAndGlyphs">4</text>
<line x1="0" y1="191.8" x2="17.4" y2="191.8" stroke="#aeb3bb" stroke-width="0.8" />
<text x="8.8" y="189.20000000000002" font-size="10.2" fill="#33363d" text-anchor="middle" textLength="4.76" lengthAdjust="spacingAndGlyphs">5</text>
<line x1="0" y1="203.5" x2="17.4" y2="203.5" stroke="#aeb3bb" stroke-width="0.8" />
<text x="8.8" y="200.9" font-size="10.2" fill="#33363d" text-anchor="middle" textLength="4.76" lengthAdjust="spacingAndGlyphs">6</text>
<line x1="0" y1="215" x2="17.4" y2="215" stroke="#aeb3bb" stroke-width="0.8" />
<text x="8.8" y="212.4" font-size="10.2" fill="#33363d" text-anchor="middle" textLength="4.76" lengthAdjust="spacingAndGlyphs">7</text>
<line x1="0" y1="243.5" x2="17.4" y2="243.5" stroke="#aeb3bb" stroke-width="0.8" />
<text x="8.8" y="240.9" font-size="10.2" fill="#33363d" text-anchor="middle" textLength="4.76" lengthAdjust="spacingAndGlyphs">8</text>
<rect x="0" y="243.5" width="17.4" height="19.0" fill="#ffd766" />
<rect x="16.6" y="243.5" width="1.2" height="19.0" fill="#e3a72d" />
<line x1="0" y1="262.5" x2="17.4" y2="262.5" stroke="#aeb3bb" stroke-width="0.8" />
<text x="8.8" y="259.9" font-size="10.2" fill="#33363d" text-anchor="middle" textLength="4.76" lengthAdjust="spacingAndGlyphs">9</text>
<line x1="0" y1="276.5" x2="17.4" y2="276.5" stroke="#aeb3bb" stroke-width="0.8" />
<text x="8.8" y="273.9" font-size="10.2" fill="#33363d" text-anchor="middle" textLength="9.53" lengthAdjust="spacingAndGlyphs">10</text>
<line x1="0" y1="290.5" x2="17.4" y2="290.5" stroke="#aeb3bb" stroke-width="0.8" />
<text x="8.8" y="287.9" font-size="10.2" fill="#33363d" text-anchor="middle" textLength="8.89" lengthAdjust="spacingAndGlyphs">11</text>
<line x1="0" y1="304.5" x2="17.4" y2="304.5" stroke="#aeb3bb" stroke-width="0.8" />
<text x="8.8" y="301.9" font-size="10.2" fill="#33363d" text-anchor="middle" textLength="9.53" lengthAdjust="spacingAndGlyphs">12</text>
<line x1="0" y1="318.5" x2="17.4" y2="318.5" stroke="#aeb3bb" stroke-width="0.8" />
<text x="8.8" y="315.9" font-size="10.2" fill="#33363d" text-anchor="middle" textLength="9.53" lengthAdjust="spacingAndGlyphs">13</text>
<line x1="0" y1="332.5" x2="17.4" y2="332.5" stroke="#aeb3bb" stroke-width="0.8" />
<text x="8.8" y="329.9" font-size="10.2" fill="#33363d" text-anchor="middle" textLength="9.53" lengthAdjust="spacingAndGlyphs">14</text>
<line x1="0" y1="346.5" x2="17.4" y2="346.5" stroke="#aeb3bb" stroke-width="0.8" />
<text x="8.8" y="343.9" font-size="10.2" fill="#33363d" text-anchor="middle" textLength="9.53" lengthAdjust="spacingAndGlyphs">15</text>
<line x1="0" y1="360.5" x2="17.4" y2="360.5" stroke="#aeb3bb" stroke-width="0.8" />
<text x="8.8" y="357.9" font-size="10.2" fill="#33363d" text-anchor="middle" textLength="9.53" lengthAdjust="spacingAndGlyphs">16</text>
<line x1="0" y1="374.5" x2="17.4" y2="374.5" stroke="#aeb3bb" stroke-width="0.8" />
<text x="8.8" y="371.9" font-size="10.2" fill="#33363d" text-anchor="middle" textLength="9.53" lengthAdjust="spacingAndGlyphs">17</text>
<line x1="0" y1="388.5" x2="17.4" y2="388.5" stroke="#aeb3bb" stroke-width="0.8" />
<text x="8.8" y="385.9" font-size="10.2" fill="#33363d" text-anchor="middle" textLength="9.53" lengthAdjust="spacingAndGlyphs">18</text>
<line x1="0" y1="402.5" x2="17.4" y2="402.5" stroke="#aeb3bb" stroke-width="0.8" />
<text x="8.8" y="399.9" font-size="10.2" fill="#33363d" text-anchor="middle" textLength="9.53" lengthAdjust="spacingAndGlyphs">19</text>
<line x1="0" y1="416.5" x2="17.4" y2="416.5" stroke="#aeb3bb" stroke-width="0.8" />
<text x="8.8" y="413.9" font-size="10.2" fill="#33363d" text-anchor="middle" textLength="9.53" lengthAdjust="spacingAndGlyphs">20</text>
<line x1="0" y1="428.4" x2="17.4" y2="428.4" stroke="#aeb3bb" stroke-width="0.8" />
<text x="8.8" y="425.79999999999995" font-size="10.2" fill="#33363d" text-anchor="middle" textLength="9.53" lengthAdjust="spacingAndGlyphs">21</text>
<line x1="0" y1="456.3" x2="17.4" y2="456.3" stroke="#aeb3bb" stroke-width="0.8" />
<text x="8.8" y="453.7" font-size="10.2" fill="#33363d" text-anchor="middle" textLength="9.53" lengthAdjust="spacingAndGlyphs">22</text>
<line x1="0" y1="475.1" x2="17.4" y2="475.1" stroke="#aeb3bb" stroke-width="0.8" />
<text x="8.8" y="472.5" font-size="10.2" fill="#33363d" text-anchor="middle" textLength="9.53" lengthAdjust="spacingAndGlyphs">23</text>
<rect x="18" y="215" width="542.5" height="28.5" fill="#6699cc" />
<rect x="18" y="428.4" width="542.5" height="27.900000000000034" fill="#6699cc" />
<rect x="119.5" y="262.5" width="441.0" height="14.0" fill="#c6d4e8" />
<rect x="119.5" y="475.1" width="441.0" height="14.0" fill="#c6d4e8" />
<rect x="273.3" y="290.5" width="287.2" height="14.0" fill="#ededed" />
<rect x="273.3" y="332.5" width="287.2" height="14.0" fill="#ededed" />
<rect x="273.3" y="374.5" width="287.2" height="14.0" fill="#ededed" />
<rect x="273.3" y="402.5" width="287.2" height="14.0" fill="#ededed" />
<line x1="119.5" y1="417.5" x2="119.5" y2="428" stroke="#dce0e7" stroke-width="0.8" />
<line x1="196.3" y1="417.5" x2="196.3" y2="428" stroke="#dce0e7" stroke-width="0.8" />
<line x1="273.3" y1="417.5" x2="273.3" y2="428" stroke="#dce0e7" stroke-width="0.8" />
<line x1="350.5" y1="417.5" x2="350.5" y2="428" stroke="#dce0e7" stroke-width="0.8" />
<line x1="403" y1="417.5" x2="403" y2="428" stroke="#dce0e7" stroke-width="0.8" />
<line x1="455.7" y1="417.5" x2="455.7" y2="428" stroke="#dce0e7" stroke-width="0.8" />
<line x1="507.8" y1="417.5" x2="507.8" y2="428" stroke="#dce0e7" stroke-width="0.8" />
<line x1="18" y1="215.3" x2="560.5" y2="215.3" stroke="#000" stroke-width="1.3" />
<line x1="18" y1="243.5" x2="560.5" y2="243.5" stroke="#000" stroke-width="1.3" />
<line x1="18" y1="428.7" x2="560.5" y2="428.7" stroke="#000" stroke-width="1.3" />
<line x1="18" y1="456.3" x2="560.5" y2="456.3" stroke="#000" stroke-width="1.3" />
<line x1="18" y1="262.5" x2="119.5" y2="262.5" stroke="#2e2e2e" stroke-width="0.9" />
<line x1="18" y1="475.1" x2="119.5" y2="475.1" stroke="#2e2e2e" stroke-width="0.9" />
<line x1="119.5" y1="262.5" x2="560.5" y2="262.5" stroke="#2e2e2e" stroke-width="0.9" />
<line x1="119.5" y1="276.5" x2="560.5" y2="276.5" stroke="#2e2e2e" stroke-width="0.9" />
<line x1="119.5" y1="262.1" x2="119.5" y2="276.9" stroke="#2e2e2e" stroke-width="0.9" />
<line x1="196.3" y1="276.5" x2="560.5" y2="276.5" stroke="#2e2e2e" stroke-width="0.9" />
<line x1="196.3" y1="290.5" x2="560.5" y2="290.5" stroke="#2e2e2e" stroke-width="0.9" />
<line x1="196.3" y1="276.1" x2="196.3" y2="290.9" stroke="#2e2e2e" stroke-width="0.9" />
<line x1="273.3" y1="290.5" x2="560.5" y2="290.5" stroke="#2e2e2e" stroke-width="0.9" />
<line x1="273.3" y1="304.5" x2="560.5" y2="304.5" stroke="#2e2e2e" stroke-width="0.9" />
<line x1="273.3" y1="290.1" x2="273.3" y2="304.9" stroke="#2e2e2e" stroke-width="0.9" />
<line x1="273.3" y1="304.5" x2="560.5" y2="304.5" stroke="#2e2e2e" stroke-width="0.9" />
<line x1="273.3" y1="318.5" x2="560.5" y2="318.5" stroke="#2e2e2e" stroke-width="0.9" />
<line x1="273.3" y1="304.1" x2="273.3" y2="318.9" stroke="#2e2e2e" stroke-width="0.9" />
<line x1="196.3" y1="318.5" x2="560.5" y2="318.5" stroke="#2e2e2e" stroke-width="0.9" />
<line x1="196.3" y1="332.5" x2="560.5" y2="332.5" stroke="#2e2e2e" stroke-width="0.9" />
<line x1="196.3" y1="318.1" x2="196.3" y2="332.9" stroke="#2e2e2e" stroke-width="0.9" />
<line x1="273.3" y1="332.5" x2="560.5" y2="332.5" stroke="#2e2e2e" stroke-width="0.9" />
<line x1="273.3" y1="346.5" x2="560.5" y2="346.5" stroke="#2e2e2e" stroke-width="0.9" />
<line x1="273.3" y1="332.1" x2="273.3" y2="346.9" stroke="#2e2e2e" stroke-width="0.9" />
<line x1="273.3" y1="346.5" x2="560.5" y2="346.5" stroke="#2e2e2e" stroke-width="0.9" />
<line x1="273.3" y1="360.5" x2="560.5" y2="360.5" stroke="#2e2e2e" stroke-width="0.9" />
<line x1="273.3" y1="346.1" x2="273.3" y2="360.9" stroke="#2e2e2e" stroke-width="0.9" />
<line x1="196.3" y1="360.5" x2="560.5" y2="360.5" stroke="#2e2e2e" stroke-width="0.9" />
<line x1="196.3" y1="374.5" x2="560.5" y2="374.5" stroke="#2e2e2e" stroke-width="0.9" />
<line x1="196.3" y1="360.1" x2="196.3" y2="374.9" stroke="#2e2e2e" stroke-width="0.9" />
<line x1="273.3" y1="374.5" x2="560.5" y2="374.5" stroke="#2e2e2e" stroke-width="0.9" />
<line x1="273.3" y1="388.5" x2="560.5" y2="388.5" stroke="#2e2e2e" stroke-width="0.9" />
<line x1="273.3" y1="374.1" x2="273.3" y2="388.9" stroke="#2e2e2e" stroke-width="0.9" />
<line x1="196.3" y1="388.5" x2="560.5" y2="388.5" stroke="#2e2e2e" stroke-width="0.9" />
<line x1="196.3" y1="402.5" x2="560.5" y2="402.5" stroke="#2e2e2e" stroke-width="0.9" />
<line x1="196.3" y1="388.1" x2="196.3" y2="402.9" stroke="#2e2e2e" stroke-width="0.9" />
<line x1="273.3" y1="402.5" x2="560.5" y2="402.5" stroke="#2e2e2e" stroke-width="0.9" />
<line x1="273.3" y1="402.1" x2="273.3" y2="416.9" stroke="#2e2e2e" stroke-width="0.9" />
<line x1="119.5" y1="475.1" x2="560.5" y2="475.1" stroke="#2e2e2e" stroke-width="0.9" />
<line x1="119.5" y1="475.1" x2="119.5" y2="480" stroke="#2e2e2e" stroke-width="0.9" />
<line x1="18" y1="416.5" x2="560.5" y2="416.5" stroke="#000" stroke-width="1.6" />
<line x1="403" y1="243.5" x2="403" y2="416.5" stroke="#4a4a4a" stroke-width="1.25" />
<line x1="403" y1="456.5" x2="403" y2="480" stroke="#4a4a4a" stroke-width="1.25" />
<line x1="455.7" y1="243.5" x2="455.7" y2="416.5" stroke="#2e2e2e" stroke-width="0.9" />
<line x1="455.7" y1="456.5" x2="455.7" y2="480" stroke="#2e2e2e" stroke-width="0.9" />
<line x1="507.8" y1="243.5" x2="507.8" y2="416.5" stroke="#000" stroke-width="1.4" />
<line x1="507.8" y1="456.5" x2="507.8" y2="480" stroke="#000" stroke-width="1.4" />
<line x1="560.3" y1="126" x2="560.3" y2="480" stroke="#000" stroke-width="1.35" />
<rect x="507.9" y="244.3" width="52.3" height="17.9" fill="none" stroke="#1a1a1a" stroke-width="1.4" />
<rect x="509.2" y="245.6" width="49.7" height="15.2" fill="none" stroke="#fff" stroke-width="0.9" />
<rect x="558.8" y="260.8" width="3.4" height="3.4" fill="#000" stroke="#fff" stroke-width="0.6" />
<text x="25.5" y="141.5" font-size="10.5" fill="#000" font-weight="bold" textLength="101.75" lengthAdjust="spacingAndGlyphs">Employee Effort Report</text>
<text x="450.6" y="141.5" font-size="10.5" fill="#000" font-weight="bold" text-anchor="end" textLength="60.5" lengthAdjust="spacingAndGlyphs">Date Created:</text>
<text x="457.5" y="141.5" font-size="10.5" fill="#000" textLength="38.75" lengthAdjust="spacingAndGlyphs">01-Jun-22</text>
<text x="114.3" y="165.45" font-size="10.5" fill="#000" font-weight="bold" text-anchor="end" textLength="48.25" lengthAdjust="spacingAndGlyphs">Date From:</text>
<text x="122.3" y="165.45" font-size="10.5" fill="#000" textLength="41.25" lengthAdjust="spacingAndGlyphs">10-May-22</text>
<text x="450.6" y="165.45" font-size="10.5" fill="#000" font-weight="bold" text-anchor="end" textLength="51" lengthAdjust="spacingAndGlyphs">For Project:</text>
<text x="457.5" y="165.45" font-size="10.5" fill="#000" textLength="76.25" lengthAdjust="spacingAndGlyphs">Widget Co. Project</text>
<text x="114.3" y="177.25" font-size="10.5" fill="#000" font-weight="bold" text-anchor="end" textLength="36.25" lengthAdjust="spacingAndGlyphs">Date To:</text>
<text x="122.3" y="177.25" font-size="10.5" fill="#000" textLength="41.25" lengthAdjust="spacingAndGlyphs">30-May-22</text>
<text x="450.6" y="177.25" font-size="10.5" fill="#000" font-weight="bold" text-anchor="end" textLength="34.25" lengthAdjust="spacingAndGlyphs">Activity:</text>
<text x="457.5" y="177.25" font-size="10.5" fill="#000" textLength="10" lengthAdjust="spacingAndGlyphs">All</text>
<text x="450.6" y="189.05" font-size="10.5" fill="#000" font-weight="bold" text-anchor="end" textLength="22.25" lengthAdjust="spacingAndGlyphs">Task:</text>
<text x="457.5" y="189.05" font-size="10.5" fill="#000" textLength="10" lengthAdjust="spacingAndGlyphs">All</text>
<text x="450.6" y="200.75" font-size="10.5" fill="#000" font-weight="bold" text-anchor="end" textLength="29.25" lengthAdjust="spacingAndGlyphs">Group:</text>
<text x="457.5" y="200.75" font-size="10.5" fill="#000" textLength="72.5" lengthAdjust="spacingAndGlyphs">Engineering Team</text>
<text x="68.75" y="233" font-size="10.5" fill="#fff" font-weight="bold" text-anchor="middle" textLength="43.52" lengthAdjust="spacingAndGlyphs">Employee</text>
<text x="157.9" y="233" font-size="10.5" fill="#fff" font-weight="bold" text-anchor="middle" textLength="31.25" lengthAdjust="spacingAndGlyphs">Project</text>
<text x="234.8" y="233" font-size="10.5" fill="#fff" font-weight="bold" text-anchor="middle" textLength="33.28" lengthAdjust="spacingAndGlyphs">Activity</text>
<text x="311.9" y="233" font-size="10.5" fill="#fff" font-weight="bold" text-anchor="middle" textLength="20.31" lengthAdjust="spacingAndGlyphs">Task</text>
<text x="376.75" y="233" font-size="10.5" fill="#fff" font-weight="bold" text-anchor="middle" textLength="43.9" lengthAdjust="spacingAndGlyphs">16-May-22</text>
<text x="429.35" y="233" font-size="10.5" fill="#fff" font-weight="bold" text-anchor="middle" textLength="43.9" lengthAdjust="spacingAndGlyphs">23-May-22</text>
<text x="481.75" y="233" font-size="10.5" fill="#fff" font-weight="bold" text-anchor="middle" textLength="43.9" lengthAdjust="spacingAndGlyphs">30-May-22</text>
<text x="534.15" y="233" font-size="10.5" fill="#fff" font-weight="bold" text-anchor="middle" textLength="21.8" lengthAdjust="spacingAndGlyphs">Total</text>
<text x="68.75" y="446" font-size="10.5" fill="#fff" font-weight="bold" text-anchor="middle" textLength="43.52" lengthAdjust="spacingAndGlyphs">Employee</text>
<text x="157.9" y="446" font-size="10.5" fill="#fff" font-weight="bold" text-anchor="middle" textLength="31.25" lengthAdjust="spacingAndGlyphs">Project</text>
<text x="234.8" y="446" font-size="10.5" fill="#fff" font-weight="bold" text-anchor="middle" textLength="33.28" lengthAdjust="spacingAndGlyphs">Activity</text>
<text x="311.9" y="446" font-size="10.5" fill="#fff" font-weight="bold" text-anchor="middle" textLength="20.31" lengthAdjust="spacingAndGlyphs">Task</text>
<text x="376.75" y="446" font-size="10.5" fill="#fff" font-weight="bold" text-anchor="middle" textLength="43.9" lengthAdjust="spacingAndGlyphs">16-May-22</text>
<text x="429.35" y="446" font-size="10.5" fill="#fff" font-weight="bold" text-anchor="middle" textLength="43.9" lengthAdjust="spacingAndGlyphs">23-May-22</text>
<text x="481.75" y="446" font-size="10.5" fill="#fff" font-weight="bold" text-anchor="middle" textLength="43.9" lengthAdjust="spacingAndGlyphs">30-May-22</text>
<text x="534.15" y="446" font-size="10.5" fill="#fff" font-weight="bold" text-anchor="middle" textLength="21.8" lengthAdjust="spacingAndGlyphs">Total</text>
<text x="19.7" y="256.5" font-size="10.5" fill="#000" font-weight="bold" textLength="58.7" lengthAdjust="spacingAndGlyphs">Brahe, Tycho</text>
<text x="401.1" y="256.4" font-size="10.5" fill="#000" text-anchor="end" textLength="16.8" lengthAdjust="spacingAndGlyphs">37.5</text>
<text x="453.8" y="256.4" font-size="10.5" fill="#000" text-anchor="end" textLength="16.8" lengthAdjust="spacingAndGlyphs">30.5</text>
<text x="505.90000000000003" y="256.4" font-size="10.5" fill="#000" text-anchor="end" textLength="16.8" lengthAdjust="spacingAndGlyphs">37.5</text>
<text x="558.9" y="256.4" font-size="10.5" fill="#000" font-weight="bold" text-anchor="end" textLength="22.07" lengthAdjust="spacingAndGlyphs">105.5</text>
<text x="19.7" y="469.1" font-size="10.5" fill="#000" font-weight="bold" textLength="48.8" lengthAdjust="spacingAndGlyphs">Byron, Ada</text>
<text x="401.1" y="469.1" font-size="10.5" fill="#000" text-anchor="end" textLength="16.8" lengthAdjust="spacingAndGlyphs">35.0</text>
<text x="453.8" y="469.1" font-size="10.5" fill="#000" text-anchor="end" textLength="16.8" lengthAdjust="spacingAndGlyphs">29.5</text>
<text x="505.90000000000003" y="469.1" font-size="10.5" fill="#000" text-anchor="end" textLength="16.8" lengthAdjust="spacingAndGlyphs">28.5</text>
<text x="558.9" y="469.1" font-size="10.5" fill="#000" font-weight="bold" text-anchor="end" textLength="17.16" lengthAdjust="spacingAndGlyphs">93.0</text>
<text x="121.3" y="272.5" font-size="10.5" fill="#000" textLength="75.59" lengthAdjust="spacingAndGlyphs">Widget Co. Project</text>
<text x="401.1" y="272.5" font-size="10.5" fill="#000" text-anchor="end" textLength="16.8" lengthAdjust="spacingAndGlyphs">37.5</text>
<text x="453.8" y="272.5" font-size="10.5" fill="#000" text-anchor="end" textLength="16.8" lengthAdjust="spacingAndGlyphs">30.5</text>
<text x="505.90000000000003" y="272.5" font-size="10.5" fill="#000" text-anchor="end" textLength="16.8" lengthAdjust="spacingAndGlyphs">37.5</text>
<text x="558.9" y="272.5" font-size="10.5" fill="#000" font-weight="bold" text-anchor="end" textLength="22.07" lengthAdjust="spacingAndGlyphs">105.5</text>
<text x="198.10000000000002" y="286.5" font-size="10.5" fill="#000" textLength="33.76" lengthAdjust="spacingAndGlyphs">Analysis</text>
<text x="401.1" y="286.5" font-size="10.5" fill="#000" text-anchor="end" textLength="16.8" lengthAdjust="spacingAndGlyphs">37.5</text>
<text x="558.9" y="286.5" font-size="10.5" fill="#000" font-weight="bold" text-anchor="end" textLength="17.16" lengthAdjust="spacingAndGlyphs">37.5</text>
<text x="275.1" y="300.5" font-size="10.5" fill="#000" textLength="66.52" lengthAdjust="spacingAndGlyphs">Client Interviews</text>
<text x="401.1" y="300.5" font-size="10.5" fill="#000" text-anchor="end" textLength="16.8" lengthAdjust="spacingAndGlyphs">29.0</text>
<text x="558.9" y="300.5" font-size="10.5" fill="#000" font-weight="bold" text-anchor="end" textLength="17.16" lengthAdjust="spacingAndGlyphs">29.0</text>
<text x="275.1" y="314.5" font-size="10.5" fill="#000" textLength="60.99" lengthAdjust="spacingAndGlyphs">Documentation</text>
<text x="401.1" y="314.5" font-size="10.5" fill="#000" text-anchor="end" textLength="12.0" lengthAdjust="spacingAndGlyphs">4.5</text>
<text x="558.9" y="314.5" font-size="10.5" fill="#000" font-weight="bold" text-anchor="end" textLength="12.26" lengthAdjust="spacingAndGlyphs">4.5</text>
<text x="198.10000000000002" y="328.5" font-size="10.5" fill="#000" textLength="28.22" lengthAdjust="spacingAndGlyphs">Design</text>
<text x="453.8" y="328.5" font-size="10.5" fill="#000" text-anchor="end" textLength="16.8" lengthAdjust="spacingAndGlyphs">25.5</text>
<text x="505.90000000000003" y="328.5" font-size="10.5" fill="#000" text-anchor="end" textLength="16.8" lengthAdjust="spacingAndGlyphs">13.0</text>
<text x="558.9" y="328.5" font-size="10.5" fill="#000" font-weight="bold" text-anchor="end" textLength="17.16" lengthAdjust="spacingAndGlyphs">38.5</text>
<text x="275.1" y="342.5" font-size="10.5" fill="#000" textLength="69.56" lengthAdjust="spacingAndGlyphs">Database Design</text>
<text x="505.90000000000003" y="342.5" font-size="10.5" fill="#000" text-anchor="end" textLength="12.0" lengthAdjust="spacingAndGlyphs">8.0</text>
<text x="558.9" y="342.5" font-size="10.5" fill="#000" font-weight="bold" text-anchor="end" textLength="12.26" lengthAdjust="spacingAndGlyphs">8.0</text>
<text x="275.1" y="356.5" font-size="10.5" fill="#000" textLength="80.66" lengthAdjust="spacingAndGlyphs">Integration Planning</text>
<text x="453.8" y="356.5" font-size="10.5" fill="#000" text-anchor="end" textLength="16.8" lengthAdjust="spacingAndGlyphs">25.5</text>
<text x="505.90000000000003" y="356.5" font-size="10.5" fill="#000" text-anchor="end" textLength="12.0" lengthAdjust="spacingAndGlyphs">5.0</text>
<text x="558.9" y="356.5" font-size="10.5" fill="#000" font-weight="bold" text-anchor="end" textLength="17.16" lengthAdjust="spacingAndGlyphs">30.5</text>
<text x="198.10000000000002" y="370.5" font-size="10.5" fill="#000" textLength="60.99" lengthAdjust="spacingAndGlyphs">Documentation</text>
<text x="505.90000000000003" y="370.5" font-size="10.5" fill="#000" text-anchor="end" textLength="16.8" lengthAdjust="spacingAndGlyphs">20.5</text>
<text x="558.9" y="370.5" font-size="10.5" fill="#000" font-weight="bold" text-anchor="end" textLength="17.16" lengthAdjust="spacingAndGlyphs">20.5</text>
<text x="275.1" y="384.5" font-size="10.5" fill="#000" textLength="93.74" lengthAdjust="spacingAndGlyphs">System Documentation</text>
<text x="505.90000000000003" y="384.5" font-size="10.5" fill="#000" text-anchor="end" textLength="16.8" lengthAdjust="spacingAndGlyphs">20.5</text>
<text x="558.9" y="384.5" font-size="10.5" fill="#000" font-weight="bold" text-anchor="end" textLength="17.16" lengthAdjust="spacingAndGlyphs">20.5</text>
<text x="198.10000000000002" y="398.5" font-size="10.5" fill="#000" textLength="52.92" lengthAdjust="spacingAndGlyphs">Management</text>
<text x="453.8" y="398.5" font-size="10.5" fill="#000" text-anchor="end" textLength="12.0" lengthAdjust="spacingAndGlyphs">5.0</text>
<text x="505.90000000000003" y="398.5" font-size="10.5" fill="#000" text-anchor="end" textLength="12.0" lengthAdjust="spacingAndGlyphs">4.0</text>
<text x="558.9" y="398.5" font-size="10.5" fill="#000" font-weight="bold" text-anchor="end" textLength="12.26" lengthAdjust="spacingAndGlyphs">9.0</text>
<text x="275.1" y="412.5" font-size="10.5" fill="#000" textLength="75.61" lengthAdjust="spacingAndGlyphs">Project Scheduling</text>
<text x="453.8" y="412.5" font-size="10.5" fill="#000" text-anchor="end" textLength="12.0" lengthAdjust="spacingAndGlyphs">5.0</text>
<text x="505.90000000000003" y="412.5" font-size="10.5" fill="#000" text-anchor="end" textLength="12.0" lengthAdjust="spacingAndGlyphs">4.0</text>
<text x="558.9" y="412.5" font-size="10.5" fill="#000" font-weight="bold" text-anchor="end" textLength="12.26" lengthAdjust="spacingAndGlyphs">9.0</text>
<text x="121.3" y="485.1" font-size="10.5" fill="#000" textLength="75.59" lengthAdjust="spacingAndGlyphs">Widget Co. Project</text>
<text x="401.1" y="485.1" font-size="10.5" fill="#000" text-anchor="end" textLength="16.8" lengthAdjust="spacingAndGlyphs">35.0</text>
<text x="453.8" y="485.1" font-size="10.5" fill="#000" text-anchor="end" textLength="16.8" lengthAdjust="spacingAndGlyphs">29.5</text>
<text x="505.90000000000003" y="485.1" font-size="10.5" fill="#000" text-anchor="end" textLength="16.8" lengthAdjust="spacingAndGlyphs">28.5</text>
<text x="558.9" y="485.1" font-size="10.5" fill="#000" font-weight="bold" text-anchor="end" textLength="17.16" lengthAdjust="spacingAndGlyphs">93.0</text>
</svg>
</body></html>
